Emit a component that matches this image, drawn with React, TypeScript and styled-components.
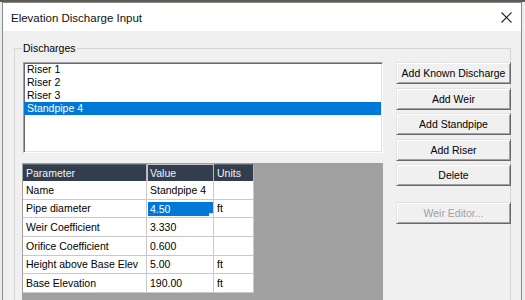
import React from "react";
import styled, { createGlobalStyle } from "styled-components";

const GlobalStyle = createGlobalStyle`
  html, body { margin: 0; padding: 0; overflow: hidden; }
  body {
    width: 525px;
    height: 300px;
    background: #ececec;
    font-family: "Liberation Sans", Arial, sans-serif;
  }
  #root { height: 300px; }
`;

const Desktop = styled.div`
  box-sizing: border-box;
  height: 300px;
  border-top: 2px solid #5f5a52;
  padding-left: 2px;
  overflow: hidden;
`;

const Window = styled.div`
  box-sizing: border-box;
  width: 520px;
  height: 320px;
  border: 1px solid #8a8a8a;
  background: #f0f0f0;
  display: flex;
  flex-direction: column;
`;

const TitleBar = styled.div`
  height: 28px;
  flex: none;
  background: #ffffff;
  display: flex;
  align-items: center;
  justify-content: space-between;
  padding-left: 8px;
`;

const Title = styled.span`
  font-size: 11.5px;
  color: #111;
  padding-top: 1px;
`;

const CloseButton = styled.div`
  width: 29px;
  height: 28px;
  display: flex;
  align-items: center;
  justify-content: center;
`;

const Client = styled.div`
  flex: 1;
  padding: 11px 10px 0 11px;
  display: flex;
  flex-direction: column;
`;

const GroupBox = styled.fieldset`
  margin: 0;
  flex: 1;
  min-width: 0;
  border: 1px solid #d5d5d5;
  padding: 7px 0 0 8px;
  display: flex;
`;

const Legend = styled.legend`
  font-size: 10.5px;
  line-height: 13px;
  color: #000;
  padding: 0 1px;
  margin-left: -1px;
`;

const Body = styled.div`
  display: flex;
  gap: 13px;
  flex: 1;
`;

const LeftColumn = styled.div`
  width: 360px;
  display: flex;
  flex-direction: column;
  gap: 10px;
`;

const ListBox = styled.div`
  box-sizing: border-box;
  height: 91px;
  background: #fff;
  border: 1px solid;
  border-color: #a0a0a0 #ffffff #ffffff #a0a0a0;
  box-shadow: inset 1px 1px 0 #696969, inset -1px -1px 0 #e3e3e3;
  display: flex;
  flex-direction: column;
  padding-right: 1px;
`;

const ListItem = styled.div<{ $selected?: boolean }>`
  height: 13px;
  line-height: 13px;
  font-size: 10.5px;
  padding-left: 3px;
  color: ${(p) => (p.$selected ? "#ffffff" : "#000000")};
  background: ${(p) => (p.$selected ? "#0078d7" : "transparent")};
`;

const GridArea = styled.div`
  flex: 1;
  background: #a0a0a0;
  padding-top: 1px;
  margin-left: -1px;
  padding-left: 1px;
`;

const Table = styled.div`
  display: grid;
  grid-template-columns: 124px 67px 40px;
  grid-template-rows: 17px repeat(6, 18.67px);
  width: 231px;
`;

const HeaderCell = styled.div<{ $active?: boolean }>`
  box-sizing: border-box;
  background: #323e4e;
  color: #f4f4f4;
  font-size: 10.5px;
  display: flex;
  align-items: center;
  padding-left: 3px;
  border-right: 1px solid #b8b8b8;
  border-top: 1px solid #5a6472;
  box-shadow: ${(p) => (p.$active ? "inset 1px 0 0 #c4c4c4" : "none")};
  ${(p) => (p.$active ? "border-top-color: #c4c4c4;" : "")}
`;

const Cell = styled.div`
  box-sizing: border-box;
  background: #fff;
  color: #000;
  font-size: 10.5px;
  display: flex;
  align-items: center;
  padding-left: 3px;
  border-right: 1px solid #c9c9c9;
  border-bottom: 1px solid #c9c9c9;
  white-space: nowrap;
  overflow: hidden;
`;

const EditCell = styled(Cell)`
  padding: 2px 0 1px 1px;
  align-items: stretch;
`;

const EditText = styled.div`
  flex: 1;
  background: #0078d7;
  color: #fff;
  padding-left: 2px;
  display: flex;
  align-items: center;
  clip-path: polygon(
    0 0,
    100% 0,
    100% calc(100% - 3px),
    calc(100% - 4px) calc(100% - 3px),
    calc(100% - 4px) 100%,
    0 100%
  );
`;

const ButtonColumn = styled.div`
  width: 115px;
  margin-right: -1px;
  display: flex;
  flex-direction: column;
  gap: 3.5px;
`;

const Button = styled.div<{ $disabled?: boolean; $spaced?: boolean }>`
  box-sizing: border-box;
  height: 22px;
  flex: none;
  background: #f0f0f0;
  border: 1px solid;
  border-color: #e3e3e3 #696969 #696969 #e3e3e3;
  box-shadow: inset 1px 1px 0 #ffffff, inset -1px -1px 0 #a0a0a0;
  font-size: 10.5px;
  color: ${(p) => (p.$disabled ? "#a0a0a0" : "#000")};
  display: flex;
  align-items: center;
  justify-content: center;
  margin-top: ${(p) => (p.$spaced ? "12.5px" : "0")};
`;

const rows: { name: string; value: string; units: string; editing?: boolean }[] = [
  { name: "Name", value: "Standpipe 4", units: "" },
  { name: "Pipe diameter", value: "4.50", units: "ft", editing: true },
  { name: "Weir Coefficient", value: "3.330", units: "" },
  { name: "Orifice Coefficient", value: "0.600", units: "" },
  { name: "Height above Base Elev", value: "5.00", units: "ft" },
  { name: "Base Elevation", value: "190.00", units: "ft" },
];

const items = ["Riser 1", "Riser 2", "Riser 3", "Standpipe 4"];

export default function App() {
  return (
    <>
      <GlobalStyle />
      <Desktop>
        <Window>
          <TitleBar>
            <Title>Elevation Discharge Input</Title>
            <CloseButton>
              <svg width="11" height="11" viewBox="0 0 11 11">
                <path d="M0.5 0.5 L10.5 10.5 M10.5 0.5 L0.5 10.5" stroke="#222" strokeWidth="1.1" />
              </svg>
            </CloseButton>
          </TitleBar>
          <Client>
            <GroupBox>
              <Legend>Discharges</Legend>
              <Body>
                <LeftColumn>
                  <ListBox>
                    {items.map((it) => (
                      <ListItem key={it} $selected={it === "Standpipe 4"}>
                        {it}
                      </ListItem>
                    ))}
                  </ListBox>
                  <GridArea>
                    <Table>
                      <HeaderCell>Parameter</HeaderCell>
                      <HeaderCell $active>Value</HeaderCell>
                      <HeaderCell>Units</HeaderCell>
                      {rows.map((r) => (
                        <React.Fragment key={r.name}>
                          <Cell>{r.name}</Cell>
                          {r.editing ? (
                            <EditCell>
                              <EditText>{r.value}</EditText>
                            </EditCell>
                          ) : (
                            <Cell>{r.value}</Cell>
                          )}
                          <Cell>{r.units}</Cell>
                        </React.Fragment>
                      ))}
                    </Table>
                  </GridArea>
                </LeftColumn>
                <ButtonColumn>
                  <Button>Add Known Discharge</Button>
                  <Button>Add Weir</Button>
                  <Button>Add Standpipe</Button>
                  <Button>Add Riser</Button>
                  <Button>Delete</Button>
                  <Button $disabled $spaced>
                    Weir Editor...
                  </Button>
                </ButtonColumn>
              </Body>
            </GroupBox>
          </Client>
        </Window>
      </Desktop>
    </>
  );
}
